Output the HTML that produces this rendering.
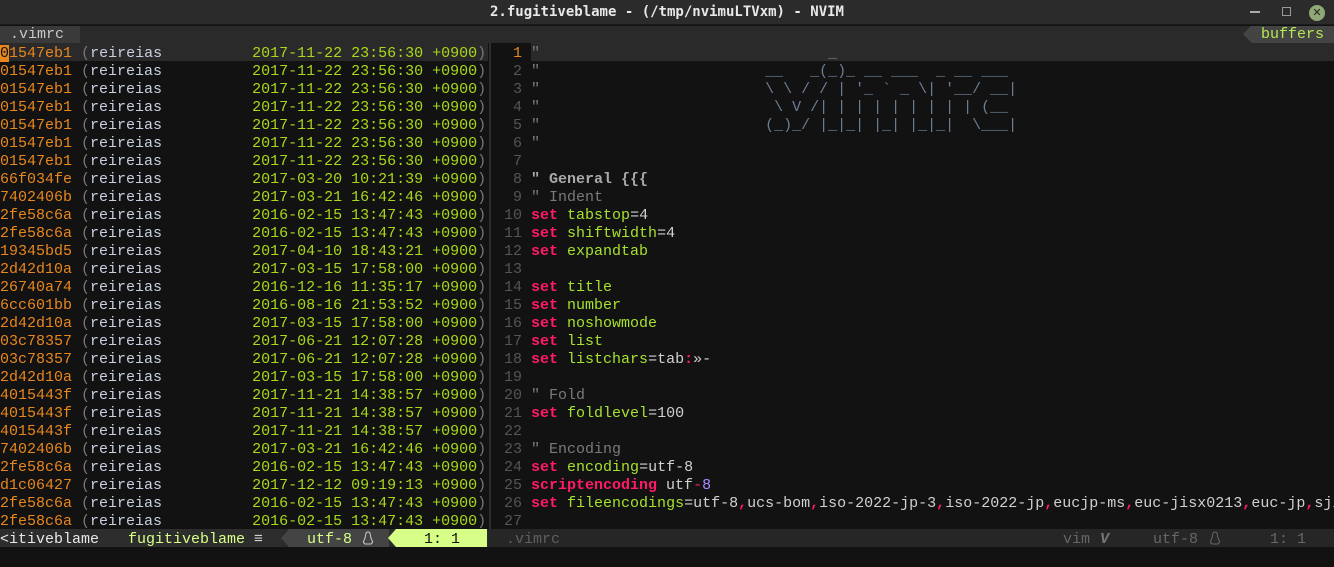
<!DOCTYPE html>
<html><head><meta charset="utf-8"><style>
*{margin:0;padding:0;box-sizing:border-box}
body{width:1334px;height:567px;background:#121212;overflow:hidden;position:relative;font-family:"Liberation Mono",monospace;font-size:15px;color:#d0d0d0}
#title{position:absolute;left:0;top:0;width:1334px;height:25px;background:#2b2b2b;border-bottom:1px solid #1a1a1a;font:bold 14px "DejaVu Sans Mono","Liberation Mono",monospace;color:#e8e8e8;text-align:center;line-height:25px}
#tab{position:absolute;left:0;top:26px;width:1334px;height:17px;background:#2a2a2a;line-height:18px}
.r{position:absolute;height:18px;line-height:18px;white-space:pre;padding-top:2px}
.L{left:0;width:488px}
.R{left:495px;width:839px;overflow:hidden}
.h{color:#e8871e}.p{color:#777}.n{color:#c8d0e0}.d{color:#a8d81a}
.ln{color:#555}.c{color:#7a7a7a}.a{color:#6c7d94}.k{color:#ff1a6a;font-weight:bold}.o{color:#a6e22e}.w{color:#d0d0d0}.v{color:#a98bff}.g{color:#aaa;font-weight:bold}
#sep{position:absolute;left:489px;top:43px;width:2px;height:486px;background:#2e2e2e}
#st{position:absolute;left:0;top:529px;width:1334px;height:18px;background:#2a2a2a;line-height:18px;white-space:pre}
#st span{position:absolute;top:0}
#st span.t{top:2px}
</style></head><body>
<div id="title">2.fugitiveblame - (/tmp/nvimuLTVxm) - NVIM</div>
<div style="position:absolute;left:1250px;top:11px;width:10px;height:2px;background:#aaa"></div>
<div style="position:absolute;left:1282px;top:7px;width:9px;height:9px;border:1px solid #999"></div>
<div style="position:absolute;left:1309px;top:5px;width:16px;height:16px;border-radius:50%;background:#8fa876;color:#222;font:bold 11px 'DejaVu Sans';text-align:center;line-height:16px">✕</div>
<div id="tab">
<div style="position:absolute;left:0;top:0;width:80px;height:17px;background:#3a3a3a;color:#c8c8c8;padding-left:10px">.vimrc <b style="color:#d7ff87;font-style:italic">V</b></div>
<div style="position:absolute;left:1243px;top:0;width:0;height:0;border-top:8.5px solid transparent;border-bottom:8.5px solid transparent;border-right:8px solid #444"></div>
<div style="position:absolute;left:1251px;top:0;width:83px;height:17px;background:#444;color:#b5e853;padding-left:10px">buffers</div>
</div>
<div style="position:absolute;left:0;top:43px;width:488px;height:18px;background:#2a2a2a"></div>
<div style="position:absolute;left:531px;top:43px;width:803px;height:18px;background:#2a2a2a"></div>
<div id="sep"></div>

<div class="r L" style="top:43px"><span style="background:#e8871e;color:#121212">0</span><span class="h">1547eb1</span> <span class="p">(</span><span class="n">reireias</span>          <span class="d">2017-11-22 23:56:30 +0900</span><span class="p">)</span></div>
<div class="r L" style="top:61px"><span class="h">01547eb1</span> <span class="p">(</span><span class="n">reireias</span>          <span class="d">2017-11-22 23:56:30 +0900</span><span class="p">)</span></div>
<div class="r L" style="top:79px"><span class="h">01547eb1</span> <span class="p">(</span><span class="n">reireias</span>          <span class="d">2017-11-22 23:56:30 +0900</span><span class="p">)</span></div>
<div class="r L" style="top:97px"><span class="h">01547eb1</span> <span class="p">(</span><span class="n">reireias</span>          <span class="d">2017-11-22 23:56:30 +0900</span><span class="p">)</span></div>
<div class="r L" style="top:115px"><span class="h">01547eb1</span> <span class="p">(</span><span class="n">reireias</span>          <span class="d">2017-11-22 23:56:30 +0900</span><span class="p">)</span></div>
<div class="r L" style="top:133px"><span class="h">01547eb1</span> <span class="p">(</span><span class="n">reireias</span>          <span class="d">2017-11-22 23:56:30 +0900</span><span class="p">)</span></div>
<div class="r L" style="top:151px"><span class="h">01547eb1</span> <span class="p">(</span><span class="n">reireias</span>          <span class="d">2017-11-22 23:56:30 +0900</span><span class="p">)</span></div>
<div class="r L" style="top:169px"><span class="h">66f034fe</span> <span class="p">(</span><span class="n">reireias</span>          <span class="d">2017-03-20 10:21:39 +0900</span><span class="p">)</span></div>
<div class="r L" style="top:187px"><span class="h">7402406b</span> <span class="p">(</span><span class="n">reireias</span>          <span class="d">2017-03-21 16:42:46 +0900</span><span class="p">)</span></div>
<div class="r L" style="top:205px"><span class="h">2fe58c6a</span> <span class="p">(</span><span class="n">reireias</span>          <span class="d">2016-02-15 13:47:43 +0900</span><span class="p">)</span></div>
<div class="r L" style="top:223px"><span class="h">2fe58c6a</span> <span class="p">(</span><span class="n">reireias</span>          <span class="d">2016-02-15 13:47:43 +0900</span><span class="p">)</span></div>
<div class="r L" style="top:241px"><span class="h">19345bd5</span> <span class="p">(</span><span class="n">reireias</span>          <span class="d">2017-04-10 18:43:21 +0900</span><span class="p">)</span></div>
<div class="r L" style="top:259px"><span class="h">2d42d10a</span> <span class="p">(</span><span class="n">reireias</span>          <span class="d">2017-03-15 17:58:00 +0900</span><span class="p">)</span></div>
<div class="r L" style="top:277px"><span class="h">26740a74</span> <span class="p">(</span><span class="n">reireias</span>          <span class="d">2016-12-16 11:35:17 +0900</span><span class="p">)</span></div>
<div class="r L" style="top:295px"><span class="h">6cc601bb</span> <span class="p">(</span><span class="n">reireias</span>          <span class="d">2016-08-16 21:53:52 +0900</span><span class="p">)</span></div>
<div class="r L" style="top:313px"><span class="h">2d42d10a</span> <span class="p">(</span><span class="n">reireias</span>          <span class="d">2017-03-15 17:58:00 +0900</span><span class="p">)</span></div>
<div class="r L" style="top:331px"><span class="h">03c78357</span> <span class="p">(</span><span class="n">reireias</span>          <span class="d">2017-06-21 12:07:28 +0900</span><span class="p">)</span></div>
<div class="r L" style="top:349px"><span class="h">03c78357</span> <span class="p">(</span><span class="n">reireias</span>          <span class="d">2017-06-21 12:07:28 +0900</span><span class="p">)</span></div>
<div class="r L" style="top:367px"><span class="h">2d42d10a</span> <span class="p">(</span><span class="n">reireias</span>          <span class="d">2017-03-15 17:58:00 +0900</span><span class="p">)</span></div>
<div class="r L" style="top:385px"><span class="h">4015443f</span> <span class="p">(</span><span class="n">reireias</span>          <span class="d">2017-11-21 14:38:57 +0900</span><span class="p">)</span></div>
<div class="r L" style="top:403px"><span class="h">4015443f</span> <span class="p">(</span><span class="n">reireias</span>          <span class="d">2017-11-21 14:38:57 +0900</span><span class="p">)</span></div>
<div class="r L" style="top:421px"><span class="h">4015443f</span> <span class="p">(</span><span class="n">reireias</span>          <span class="d">2017-11-21 14:38:57 +0900</span><span class="p">)</span></div>
<div class="r L" style="top:439px"><span class="h">7402406b</span> <span class="p">(</span><span class="n">reireias</span>          <span class="d">2017-03-21 16:42:46 +0900</span><span class="p">)</span></div>
<div class="r L" style="top:457px"><span class="h">2fe58c6a</span> <span class="p">(</span><span class="n">reireias</span>          <span class="d">2016-02-15 13:47:43 +0900</span><span class="p">)</span></div>
<div class="r L" style="top:475px"><span class="h">d1c06427</span> <span class="p">(</span><span class="n">reireias</span>          <span class="d">2017-12-12 09:19:13 +0900</span><span class="p">)</span></div>
<div class="r L" style="top:493px"><span class="h">2fe58c6a</span> <span class="p">(</span><span class="n">reireias</span>          <span class="d">2016-02-15 13:47:43 +0900</span><span class="p">)</span></div>
<div class="r L" style="top:511px"><span class="h">2fe58c6a</span> <span class="p">(</span><span class="n">reireias</span>          <span class="d">2016-02-15 13:47:43 +0900</span><span class="p">)</span></div>

<div class="r R" style="top:43px"><span class="h">  1 </span><span class="c">"</span><span class="a">                                _</span></div>
<div class="r R" style="top:61px"><span class="ln">  2 </span><span class="c">"</span><span class="a">                         __   _(_)_ __ ___  _ __ ___</span></div>
<div class="r R" style="top:79px"><span class="ln">  3 </span><span class="c">"</span><span class="a">                         \ \ / / | '_ ` _ \| '__/ __|</span></div>
<div class="r R" style="top:97px"><span class="ln">  4 </span><span class="c">"</span><span class="a">                          \ V /| | | | | | | | | (__</span></div>
<div class="r R" style="top:115px"><span class="ln">  5 </span><span class="c">"</span><span class="a">                         (_)_/ |_|_| |_| |_|_|  \___|</span></div>
<div class="r R" style="top:133px"><span class="ln">  6 </span><span class="c">"</span></div>
<div class="r R" style="top:151px"><span class="ln">  7 </span></div>
<div class="r R" style="top:169px"><span class="ln">  8 </span><span class="g">" General {{{</span></div>
<div class="r R" style="top:187px"><span class="ln">  9 </span><span class="c">" Indent</span></div>
<div class="r R" style="top:205px"><span class="ln"> 10 </span><span class="k">set</span> <span class="o">tabstop</span>=4</div>
<div class="r R" style="top:223px"><span class="ln"> 11 </span><span class="k">set</span> <span class="o">shiftwidth</span>=4</div>
<div class="r R" style="top:241px"><span class="ln"> 12 </span><span class="k">set</span> <span class="o">expandtab</span></div>
<div class="r R" style="top:259px"><span class="ln"> 13 </span></div>
<div class="r R" style="top:277px"><span class="ln"> 14 </span><span class="k">set</span> <span class="o">title</span></div>
<div class="r R" style="top:295px"><span class="ln"> 15 </span><span class="k">set</span> <span class="o">number</span></div>
<div class="r R" style="top:313px"><span class="ln"> 16 </span><span class="k">set</span> <span class="o">noshowmode</span></div>
<div class="r R" style="top:331px"><span class="ln"> 17 </span><span class="k">set</span> <span class="o">list</span></div>
<div class="r R" style="top:349px"><span class="ln"> 18 </span><span class="k">set</span> <span class="o">listchars</span>=tab<span class="k">:</span>»-</div>
<div class="r R" style="top:367px"><span class="ln"> 19 </span></div>
<div class="r R" style="top:385px"><span class="ln"> 20 </span><span class="c">" Fold</span></div>
<div class="r R" style="top:403px"><span class="ln"> 21 </span><span class="k">set</span> <span class="o">foldlevel</span>=100</div>
<div class="r R" style="top:421px"><span class="ln"> 22 </span></div>
<div class="r R" style="top:439px"><span class="ln"> 23 </span><span class="c">" Encoding</span></div>
<div class="r R" style="top:457px"><span class="ln"> 24 </span><span class="k">set</span> <span class="o">encoding</span>=utf-8</div>
<div class="r R" style="top:475px"><span class="ln"> 25 </span><span class="k">scriptencoding</span> utf<span class="k" style="font-weight:normal">-</span><span class="v">8</span></div>
<div class="r R" style="top:493px"><span class="ln"> 26 </span><span class="k">set</span> <span class="o">fileencodings</span>=utf-8<span class="k">,</span>ucs-bom<span class="k">,</span>iso-2022-jp-3<span class="k">,</span>iso-2022-jp<span class="k">,</span>eucjp-ms<span class="k">,</span>euc-jisx0213<span class="k">,</span>euc-jp<span class="k">,</span>sjis</div>
<div class="r R" style="top:511px"><span class="ln"> 27 </span></div>

<div id="st">
<span style="left:0;width:281px;height:18px;background:#2d2d2d"></span>
<span class="t" style="left:0;color:#e8e8e8">&lt;itiveblame</span>
<span class="t" style="left:128px;color:#d7ff87">fugitiveblame</span>
<span class="t" style="left:254px;color:#d0d0d0">≡</span>
<span style="left:281px;width:0;height:0;border-top:9px solid transparent;border-bottom:9px solid transparent;border-right:8px solid #444"></span>
<span style="left:289px;width:100px;height:18px;background:#444"></span>
<span class="t" style="left:307px;color:#d7ff87">utf-8</span>
<span style="left:362px;top:2px"><svg width="12" height="14" viewBox="0 0 12 14"><path d="M6 1C4 1 3.5 3 3.5 5C3.5 7 1.5 9 1.5 11.5L3 13H9L10.5 11.5C10.5 9 8.5 7 8.5 5C8.5 3 8 1 6 1Z" fill="none" stroke="#ccc" stroke-width="1"/></svg></span>
<span style="left:388px;width:0;height:0;border-top:9px solid transparent;border-bottom:9px solid transparent;border-right:8px solid #d7ff87"></span>
<span style="left:396px;width:91px;height:18px;background:#d7ff87"></span>
<span class="t" style="left:424px;color:#121212">1: 1</span>
<span style="left:488px;width:846px;height:18px;background:#262626"></span>
<span class="t" style="left:506px;color:#5f5f5f">.vimrc</span>
<span class="t" style="left:1063px;color:#666">vim</span>
<span class="t" style="left:1100px;color:#777;font-weight:bold;font-style:italic">V</span>
<span class="t" style="left:1153px;color:#666">utf-8</span>
<span style="left:1209px;top:2px"><svg width="12" height="14" viewBox="0 0 12 14"><path d="M6 1C4 1 3.5 3 3.5 5C3.5 7 1.5 9 1.5 11.5L3 13H9L10.5 11.5C10.5 9 8.5 7 8.5 5C8.5 3 8 1 6 1Z" fill="none" stroke="#666" stroke-width="1"/></svg></span>
<span class="t" style="left:1270px;color:#666">1: 1</span>
</div>
</body></html>
